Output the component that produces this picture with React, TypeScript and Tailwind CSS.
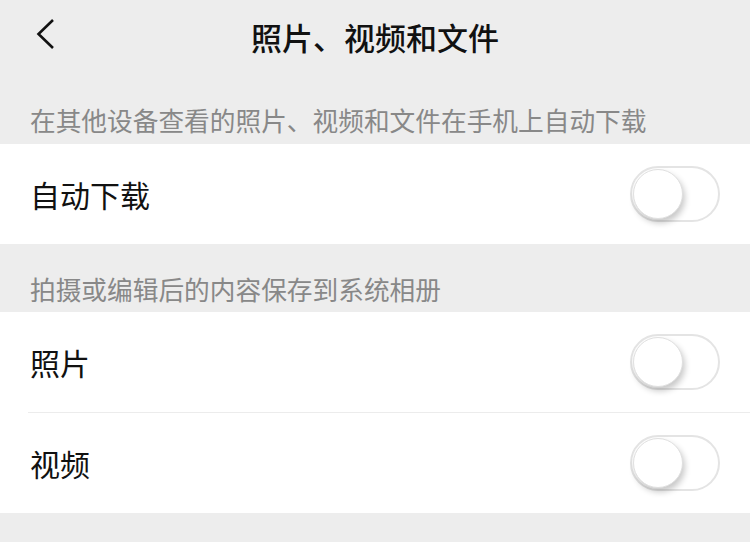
import React from 'react';

const font = { fontFamily: '"Noto Sans CJK SC", "Noto Sans", sans-serif' };

const Toggle = () => (
  <div className="w-[90px] h-[56px] rounded-full border-2 border-[#e4e4e4] bg-white flex items-center pl-[1px]">
    <div className="w-[50px] h-[50px] rounded-full bg-white border border-[#e0e0e0] shadow-[2px_4px_6px_rgba(0,0,0,0.22)]" />
  </div>
);

const Row = ({ label }: { label: string }) => (
  <div className="h-[100px] flex items-center justify-between pl-[30px] pr-[30px]">
    <span className="text-[30px] leading-none text-[#111]">{label}</span>
    <Toggle />
  </div>
);

export default function App() {
  return (
    <div className="w-[750px] h-[542px] bg-[#ededed] overflow-hidden" style={font}>
      {/* header */}
      <div className="relative h-[72px] flex items-center justify-center">
        <svg className="absolute left-[30px] top-[14px]" width="32" height="44" viewBox="0 0 32 44">
          <path d="M23 6 L8.5 20 L23 34" fill="none" stroke="#111" strokeWidth="2.6" />
        </svg>
        <span className="text-[31px] leading-none font-medium text-[#111]">照片、视频和文件</span>
      </div>

      <div className="h-[72px] pt-[24px] px-[30px] flex items-center">
        <span className="text-[25.7px] leading-none text-[#888]">在其他设备查看的照片、视频和文件在手机上自动下载</span>
      </div>

      <div className="bg-white">
        <Row label="自动下载" />
      </div>

      <div className="h-[68px] pt-[22px] px-[30px] flex items-center">
        <span className="text-[25.7px] leading-none text-[#888]">拍摄或编辑后的内容保存到系统相册</span>
      </div>

      <div className="bg-white">
        <Row label="照片" />
        <div className="ml-[28px] h-px bg-[#ececec]" />
        <Row label="视频" />
      </div>
    </div>
  );
}
